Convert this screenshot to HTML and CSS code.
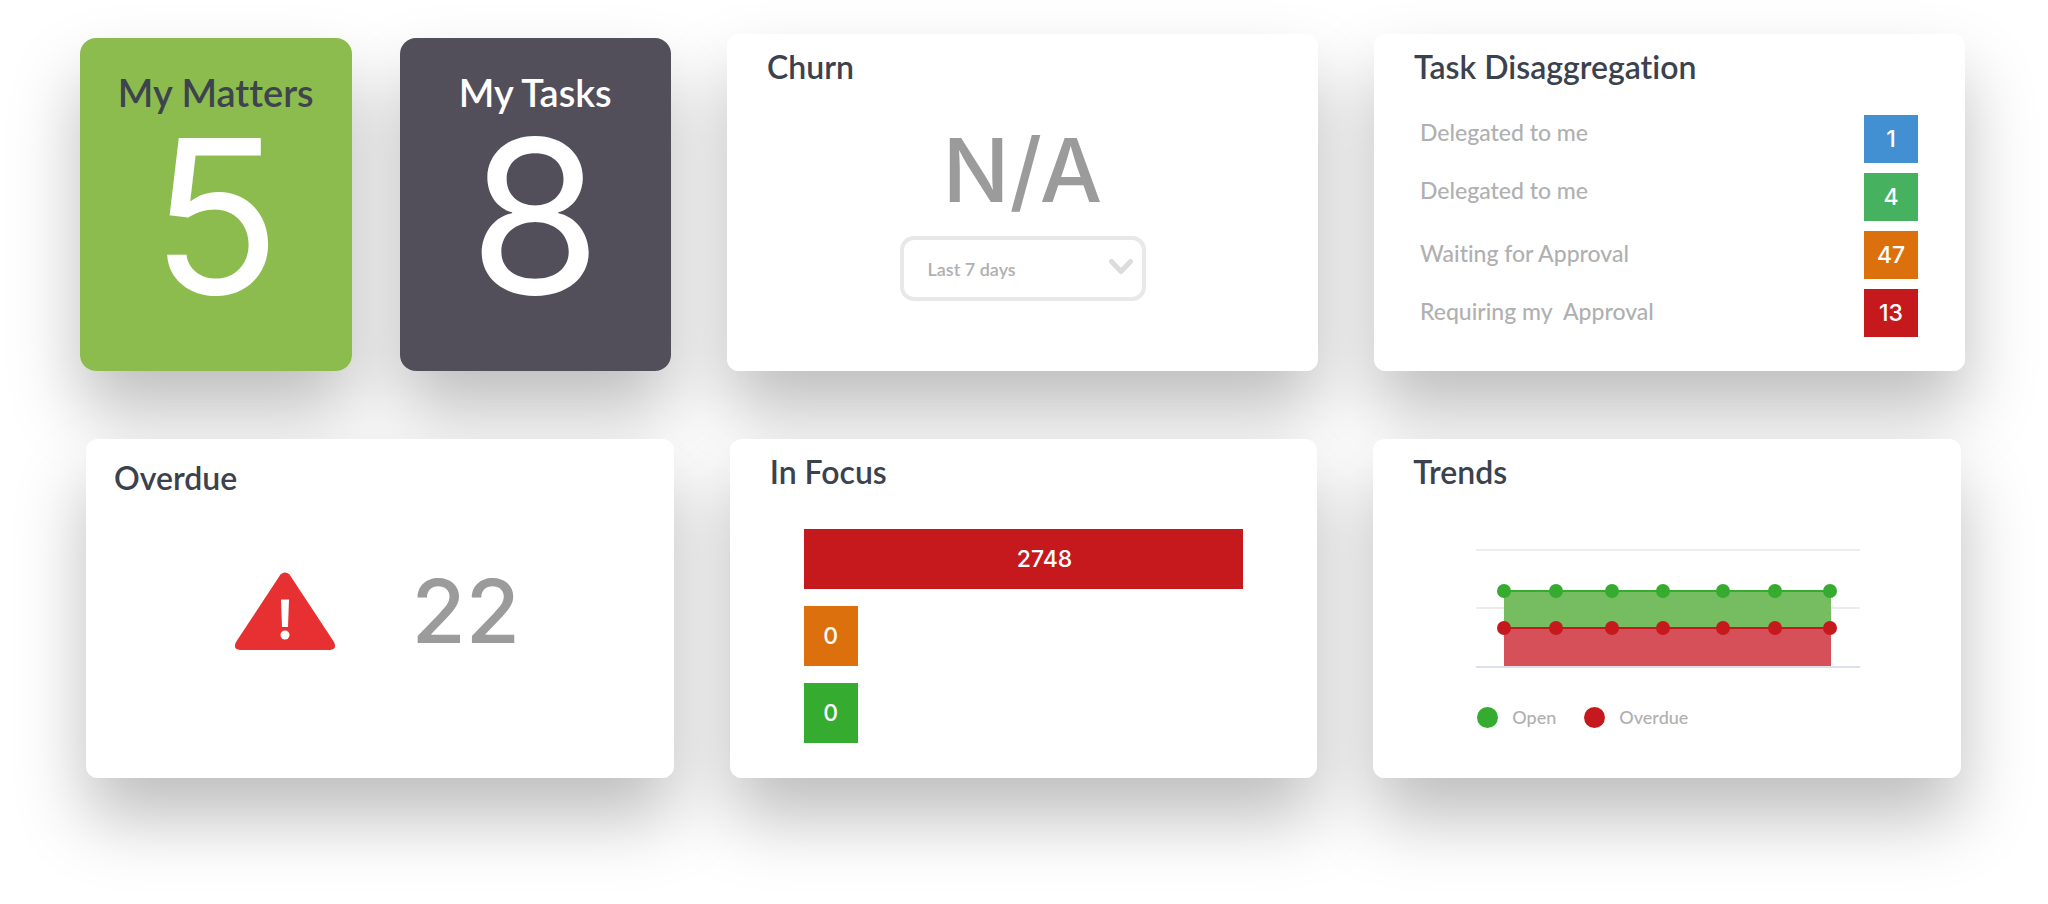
FILE: index.html
```html
<!DOCTYPE html>
<html lang="en">
<head>
    <meta charset="UTF-8">
    <meta name="viewport" content="width=device-width, initial-scale=1.0">
    <title>Dashboard</title>
    <link rel="stylesheet" href="styles.css">
</head>
<body>
    <main class="dashboard">
        <div class="row row-top">
            <div class="tiles">
                <section class="card tile tile-matters">
                    <h2 class="tile-title">My Matters</h2>
                    <p class="tile-count">5</p>
                </section>
                <section class="card tile tile-tasks">
                    <h2 class="tile-title">My Tasks</h2>
                    <p class="tile-count">8</p>
                </section>
            </div>

            <section class="card churn">
                <h2 class="card-title">Churn</h2>
                <p class="big-value">N/A</p>
                <div class="select-wrap">
                    <select class="period" aria-label="Churn period">
                        <option>Last 7 days</option>
                        <option>Last 30 days</option>
                        <option>Last 90 days</option>
                    </select>
                    <svg class="chevron" viewBox="0 0 24 16" aria-hidden="true">
                        <path d="M2.5 2.5 L12 12.5 L21.5 2.5" />
                    </svg>
                </div>
            </section>

            <section class="card breakdown">
                <h2 class="card-title">Task Disaggregation</h2>
                <ul class="breakdown-list">
                    <li class="delegated"><span>Delegated to me</span><b class="badge blue">1</b></li>
                    <li class="delegated"><span>Delegated to me</span><b class="badge mint">4</b></li>
                    <li><span>Waiting for Approval</span><b class="badge orange">47</b></li>
                    <li><span>Requiring my&nbsp; Approval</span><b class="badge red">13</b></li>
                </ul>
            </section>
        </div>

        <div class="row row-bottom">
            <section class="card overdue">
                <h2 class="card-title">Overdue</h2>
                <div class="alert">
                    <svg class="alert-icon" viewBox="0 0 102 78" aria-hidden="true">
                        <path class="alert-shape" d="M46.5 2.5 Q51 -1.5 55.5 2.5 L100 70 Q103.5 77.5 96 78 L6 78 Q-1.5 77.5 2 70 Z" />
                        <path class="alert-mark" d="M47 27.5 H55 L54 55 H48 Z" />
                        <circle class="alert-mark" cx="51" cy="63" r="4.5" />
                    </svg>
                    <p class="big-value">22</p>
                </div>
            </section>

            <section class="card focus">
                <h2 class="card-title">In Focus</h2>
                <div class="bars">
                    <div class="bar bar-full red">2748</div>
                    <div class="bar orange">0</div>
                    <div class="bar green">0</div>
                </div>
            </section>

            <section class="card trends">
                <h2 class="card-title">Trends</h2>
                <svg class="chart" viewBox="0 0 384 126" role="img" aria-label="Open and overdue tasks">
                    <path class="grid-line" d="M0 5 H384 M0 63 H384" />
                    <path class="axis-line" d="M0 122 H384" />
                    <rect class="area-open" x="28" y="46" width="327" height="38" />
                    <rect class="area-overdue" x="28" y="83" width="327" height="38" />
                    <path class="line-open" d="M28 46 H355" />
                    <path class="line-overdue" d="M28 83 H355" />
                    <g class="dots-open">
                        <circle cx="28" cy="46" r="7" /><circle cx="80" cy="46" r="7" /><circle cx="136" cy="46" r="7" />
                        <circle cx="187" cy="46" r="7" /><circle cx="247" cy="46" r="7" /><circle cx="299" cy="46" r="7" />
                        <circle cx="354" cy="46" r="7" />
                    </g>
                    <g class="dots-overdue">
                        <circle cx="28" cy="83" r="7" /><circle cx="80" cy="83" r="7" /><circle cx="136" cy="83" r="7" />
                        <circle cx="187" cy="83" r="7" /><circle cx="247" cy="83" r="7" /><circle cx="299" cy="83" r="7" />
                        <circle cx="354" cy="83" r="7" />
                    </g>
                </svg>
                <ul class="legend">
                    <li><i class="dot green"></i>Open</li>
                    <li><i class="dot red"></i>Overdue</li>
                </ul>
            </section>
        </div>
    </main>
</body>
</html>
```
FILE: styles.css
```css
* {
    box-sizing: border-box;
}
body {
    margin: 0;
    background: #fff;
    color: #3c424d;
    font-family: Lato, "Liberation Sans", sans-serif;
    font-variant-ligatures: none;
}
h2, p, ul {
    margin: 0;
    padding: 0;
}
ul {
    list-style: none;
}
.dashboard {
    position: relative;
    z-index: 0;
    display: flex;
    flex-direction: column;
    gap: 68px;
    padding: 34px 0 126px;
    overflow: hidden;
}
.row {
    display: grid;
    grid-template-columns: repeat(3, 1fr);
    gap: 56px;
}
.row-top {
    padding: 0 83px 0 80px;
}
.row-bottom {
    padding: 0 87px 0 86px;
}
.card {
    position: relative;
    min-height: 337px;
    border-radius: 12px;
    background: #fff;
}
/* shadow sits behind every card so it never tints a neighbour */
.card::before {
    content: "";
    position: absolute;
    inset: 0;
    z-index: -1;
    border-radius: inherit;
    box-shadow: 0 40px 70px rgba(0, 0, 0, 0.26);
}
.card-title {
    padding: 14px 40px 0;
    font-size: 32px;
    line-height: 38px;
    font-weight: 600;
}

/* count tiles */
.tiles {
    display: grid;
    grid-template-columns: 1fr 1fr;
    gap: 48px;
    padding-top: 4px;
}
.tile {
    min-height: 333px;
    padding-top: 31px;
    border-radius: 16px;
    color: #fff;
    text-align: center;
}
.tile-matters {
    background: #8cbc4e;
}
.tile-tasks {
    background: #524f5a;
}
.tile-title {
    font-size: 38px;
    line-height: 46px;
    font-weight: 600;
}
.tile-matters .tile-title {
    color: #3e444d;
}
.tile-count {
    font-family: Inter, sans-serif;
    font-size: 214px;
    line-height: 204px;
    font-weight: 400;
}

/* churn */
.big-value {
    color: #9b9b9b;
    font-family: Inter, sans-serif;
    font-size: 88px;
    line-height: 112px;
    font-weight: 500;
    text-align: center;
}
.churn .big-value {
    padding-top: 28px;
}
.select-wrap {
    position: relative;
    width: 246px;
    margin: 10px auto 0;
}
.period {
    width: 100%;
    height: 65px;
    padding: 0 24px;
    border: 4px solid #e8e8e8;
    border-radius: 14px;
    background: #fff;
    color: #b0b0b0;
    font: 600 18px Lato, sans-serif;
    appearance: none;
}
.chevron {
    position: absolute;
    top: 23px;
    right: 13px;
    width: 24px;
    height: 16px;
    fill: none;
    stroke: #dcdcdc;
    stroke-width: 5;
    stroke-linecap: round;
    stroke-linejoin: round;
    pointer-events: none;
}

/* colours shared by badges, bars and legend dots */
.blue {
    background: #428fd2;
}
.mint {
    background: #46b25f;
}
.orange {
    background: #dc700d;
}
.red {
    background: #c6191d;
}
.green {
    background: #35ab2f;
}

/* task disaggregation */
.breakdown-list {
    display: flex;
    flex-direction: column;
    gap: 10px;
    padding: 29px 47px 0 46px;
}
.breakdown-list li {
    display: flex;
    justify-content: space-between;
    align-items: center;
    color: #b0b0b0;
    font-size: 23px;
    line-height: 28px;
    font-weight: 500;
}
.breakdown-list span {
    padding-bottom: 4px;
}
.breakdown-list .delegated span {
    padding-bottom: 14px;
}
.badge {
    width: 54px;
    color: #fff;
    font-family: Inter, sans-serif;
    font-size: 23px;
    line-height: 48px;
    font-weight: 500;
    text-align: center;
}

/* overdue */
.row-bottom .card {
    min-height: 339px;
}
.overdue .card-title {
    padding: 20px 28px 0;
}
.alert {
    display: flex;
    justify-content: center;
    align-items: center;
    gap: 76px;
    padding: 58px 6px 0 0;
}
.alert-icon {
    width: 102px;
    height: 78px;
}
.alert-shape {
    fill: #e73031;
}
.alert-mark {
    fill: #fff;
}

/* in focus */
.bars {
    display: flex;
    flex-direction: column;
    gap: 17px;
    padding: 38px 74px 0;
}
.bar {
    width: 54px;
    color: #fff;
    font-family: Inter, sans-serif;
    font-size: 23px;
    line-height: 60px;
    font-weight: 500;
    text-align: center;
}
.bar-full {
    width: 100%;
    padding-left: 42px;
}

/* trends */
.chart {
    display: block;
    width: 384px;
    margin: 54px auto 0 103px;
}
.chart path {
    stroke-width: 2;
}
.grid-line {
    stroke: #ececec;
}
.axis-line {
    stroke: #dcdfec;
}
.area-open {
    fill: #76bd61;
}
.area-overdue {
    fill: #d6505a;
}
.line-open {
    stroke: #35ab2f;
}
.line-overdue {
    stroke: #c6191d;
}
.dots-open {
    fill: #35ab2f;
}
.dots-overdue {
    fill: #c6191d;
}
.legend {
    display: flex;
    gap: 28px;
    padding: 34px 104px 0;
    color: #b0b0b0;
    font-size: 18px;
    line-height: 24px;
    font-weight: 500;
}
.legend li {
    display: flex;
    align-items: center;
    gap: 14px;
}
.dot {
    width: 21px;
    height: 21px;
    border-radius: 50%;
}
```
